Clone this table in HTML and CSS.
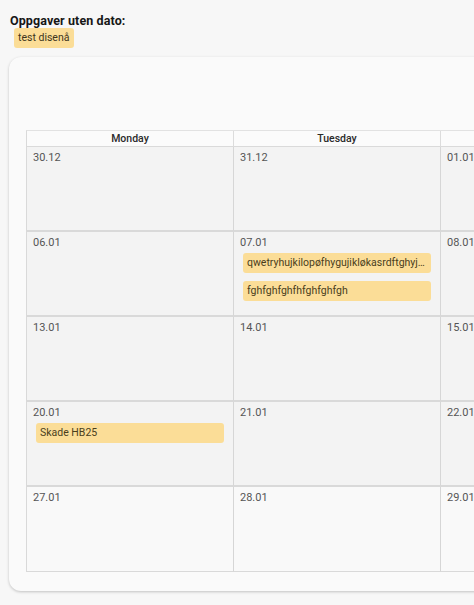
FILE: index.html
```html
<!DOCTYPE html>
<html>
<head>
<meta charset="utf-8">
<link rel="stylesheet" href="styles.css">
</head>
<body>
<section class="unscheduled">
  <h2 class="unscheduled-title">Oppgaver uten dato:</h2>
  <div class="chips"><span class="chip">test disenå</span></div>
</section>
<div class="card">
  <div class="toolbar"></div>
  <div class="calendar">
    <div class="head">Monday</div>
    <div class="head">Tuesday</div>
    <div class="head">Wednesday</div>
    <div class="head">Thursday</div>

    <div class="day"><span class="date">30.12</span></div>
    <div class="day"><span class="date">31.12</span></div>
    <div class="day"><span class="date">01.01</span></div>
    <div class="day"><span class="date">02.01</span></div>

    <div class="day"><span class="date">06.01</span></div>
    <div class="day"><span class="date">07.01</span>
      <div class="event">qwetryhujkilopøfhygujikløkasrdftghyjkløpoiuytre</div>
      <div class="event">fghfghfghfhfghfghfgh</div>
    </div>
    <div class="day"><span class="date">08.01</span></div>
    <div class="day"><span class="date">09.01</span></div>

    <div class="day"><span class="date">13.01</span></div>
    <div class="day"><span class="date">14.01</span></div>
    <div class="day"><span class="date">15.01</span></div>
    <div class="day"><span class="date">16.01</span></div>

    <div class="day"><span class="date">20.01</span>
      <div class="event">Skade HB25</div>
    </div>
    <div class="day"><span class="date">21.01</span></div>
    <div class="day"><span class="date">22.01</span></div>
    <div class="day"><span class="date">23.01</span></div>

    <div class="day light"><span class="date">27.01</span></div>
    <div class="day light"><span class="date">28.01</span></div>
    <div class="day light"><span class="date">29.01</span></div>
    <div class="day light"><span class="date">30.01</span></div>
  </div>
</div>
</body>
</html>
```
FILE: styles.css
```css
html, body {
  margin: 0;
  padding: 0;
  overflow: hidden;
}
body {
  background: #f7f7f7;
  font-family: Roboto, "Open Sans", sans-serif;
  color: #222;
  width: 474px;
  height: 605px;
}
.unscheduled {
  padding: 13px 0 0 10px;
}
.unscheduled-title {
  margin: 0;
  font-size: 12.5px;
  font-weight: 700;
  line-height: 15px;
  color: #161616;
  letter-spacing: 0.1px;
}
.chips {
  display: flex;
  padding-left: 4px;
  margin-top: 0;
}
.chip {
  background: #fbdd97;
  border-radius: 3px;
  font-size: 10.5px;
  line-height: 20px;
  padding: 0 5px 0 4px;
  color: #3e3520;
}
.card {
  margin: 9px 0 0 9px;
  width: 900px;
  background: #fafafa;
  border-radius: 12px;
  box-shadow: 0 1px 3px rgba(0,0,0,0.22);
  padding: 0 0 19px 17px;
}
.toolbar {
  height: 73px;
}
.calendar {
  display: grid;
  grid-template-columns: repeat(4, 207px);
  grid-template-rows: 16px repeat(5, 85px);
  border-left: 1px solid #d9d9d9;
  border-top: 1px solid #e2e2e2;
}
.head {
  background: #fbfbfb;
  border-right: 1px solid #dcdcdc;
  border-bottom: 1px solid #dadada;
  font-size: 10.5px;
  font-weight: 500;
  text-align: center;
  line-height: 15px;
  color: #2a2a2a;
}
.day {
  background: #f3f3f3;
  border-right: 1px solid #d6d6d6;
  border-bottom: 2px solid #d9d9d9;
  padding: 4px 9px 0 6px;
  display: flex;
  flex-direction: column;
  gap: 8px;
  min-width: 0;
}
.day.light {
  background: #f9f9f9;
  border-bottom: 1px solid #d9d9d9;
}
.date {
  font-size: 11px;
  line-height: 13px;
  color: #555;
  margin-bottom: -4px;
}
.event {
  background: #fbdd97;
  border-radius: 3px;
  height: 20px;
  line-height: 20px;
  font-size: 10.5px;
  color: #4a3d1c;
  padding: 0 4px;
  margin-left: 3px;
  white-space: nowrap;
  overflow: hidden;
  text-overflow: ellipsis;
}
```
